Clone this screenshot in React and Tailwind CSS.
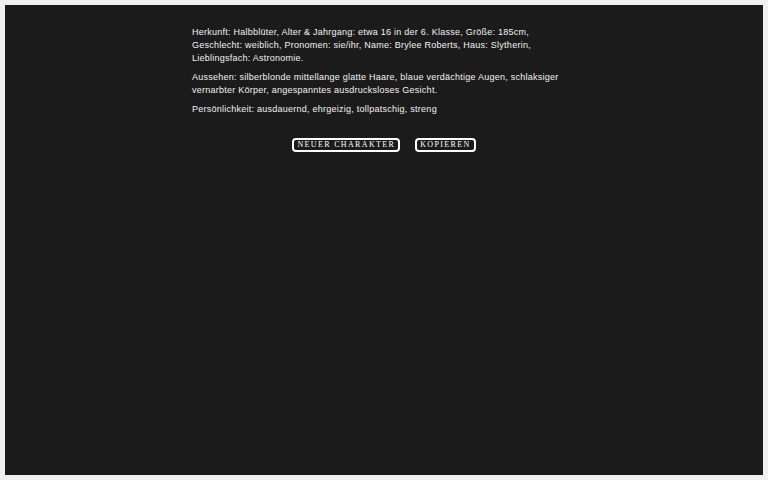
export default function App() {
  return (
    <div className="w-[768px] h-[480px] bg-[#f0f0f0] p-[5px]">
      <div className="w-full h-full bg-[#1b1b1b] pt-[21px]">
        <div className="w-[384px] mx-auto text-[9px] leading-[13px] tracking-[0.25px] text-[#f2f2f2]" style={{ fontFamily: '"Liberation Sans", Arial, sans-serif' }}>
          <p>Herkunft: Halbblüter, Alter &amp; Jahrgang: etwa 16 in der 6. Klasse, Größe: 185cm, Geschlecht: weiblich, Pronomen: sie/ihr, Name: Brylee Roberts, Haus: Slytherin, Lieblingsfach: Astronomie.</p>
          <p className="mt-[6px]">Aussehen: silberblonde mittellange glatte Haare, blaue verdächtige Augen, schlaksiger vernarbter Körper, angespanntes ausdrucksloses Gesicht.</p>
          <p className="mt-[6px]">Persönlichkeit: ausdauernd, ehrgeizig, tollpatschig, streng</p>
        </div>
        <div className="flex justify-center gap-[15px] mt-[22px]">
          <button className="h-[14px] px-[3px] border-2 border-white rounded-[4px] text-white text-[8px] leading-none tracking-[1.35px] uppercase" style={{ fontFamily: '"Liberation Serif", "Times New Roman", serif' }}>Neuer Charakter</button>
          <button className="h-[14px] px-[3px] border-2 border-white rounded-[4px] text-white text-[8px] leading-none tracking-[1.35px] uppercase" style={{ fontFamily: '"Liberation Serif", "Times New Roman", serif' }}>Kopieren</button>
        </div>
      </div>
    </div>
  );
}
